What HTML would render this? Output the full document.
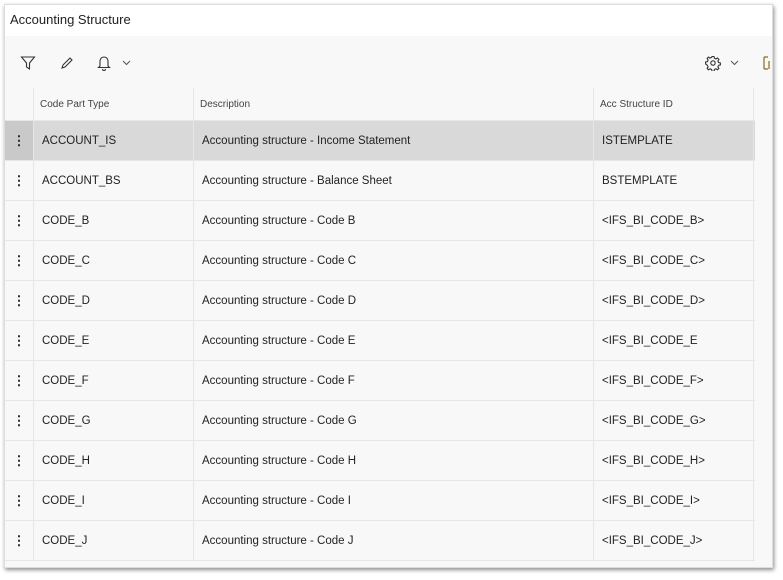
<!DOCTYPE html>
<html><head><style>
body{margin:0;width:783px;height:580px;background:#fff;font-family:"Liberation Sans",sans-serif;position:relative;overflow:hidden}
.win{position:absolute;left:4px;top:4px;width:769px;height:564px;background:#f8f8f8;box-shadow:1px 2px 4px rgba(0,0,0,.45);border:1px solid #ddd;box-sizing:border-box;overflow:hidden}
.title{height:31px;background:#fff;font-size:13px;color:#222;padding:7px 0 0 5px;box-sizing:border-box}
.tb{height:52px;position:relative}
.hdr,.row{position:absolute;left:0;height:40px;width:750px;border-bottom:1px solid #e6e6e6;box-sizing:border-box}
.hdr{top:83px;height:33px;font-size:10px;color:#444}
.c{position:absolute;top:0;height:100%;border-right:1px solid #e6e6e6;box-sizing:border-box;display:flex;align-items:center;padding-left:8px;white-space:nowrap}
.row{font-size:11.5px;color:#222}
.k{left:0;width:29px;justify-content:center;padding:0;font-weight:bold;font-size:13px}
.a{left:29px;width:160px}.b{left:189px;width:400px}.d{left:589px;width:160px}
.hdr .c{padding-left:6px}
.sel{background:#d9d9d9}.sel .k{background:#c9c9c9}
svg{position:absolute}
</style></head><body><div class="win">
<div class="title">Accounting Structure</div>
<div class="tb">
<svg style="left:15px;top:19px" width="16" height="16" viewBox="0 0 16 16" fill="none" stroke="#333" stroke-width="1.1"><path d="M1.5 2h13L9.5 8v6l-3-2V8z"/></svg>
<svg style="left:54px;top:19px" width="16" height="16" viewBox="0 0 16 16" fill="none" stroke="#333" stroke-width="1.1"><path d="M3 13l1-3 7-7 2 2-7 7z"/></svg>
<svg style="left:91px;top:18px" width="16" height="18" viewBox="0 0 16 18" fill="none" stroke="#333" stroke-width="1.1"><path d="M4 12V7a4 4 0 018 0v5l1.5 1.5h-11zM6.5 15a1.5 1.5 0 003 0"/></svg>
<svg style="left:117px;top:24px" width="9" height="6" viewBox="0 0 9 6" fill="none" stroke="#555"><path d="M1 1l3.5 3.5L8 1"/></svg>
<svg style="left:700px;top:19px" width="16" height="16" viewBox="0 0 16 16" fill="none" stroke="#333" stroke-width="1.1"><circle cx="8" cy="8" r="2.2"/><path d="M7 1.5h2l.4 1.8 1.5.7 1.6-1 1.4 1.4-1 1.6.7 1.5 1.8.4v2l-1.8.4-.7 1.5 1 1.6-1.4 1.4-1.6-1-1.5.7-.4 1.8H7l-.4-1.8-1.5-.7-1.6 1-1.4-1.4 1-1.6-.7-1.5L.6 9V7l1.8-.4.7-1.5-1-1.6 1.4-1.4 1.6 1 1.5-.7z"/></svg>
<svg style="left:725px;top:24px" width="9" height="6" viewBox="0 0 9 6" fill="none" stroke="#555"><path d="M1 1l3.5 3.5L8 1"/></svg>
<svg style="left:758px;top:20px" width="12" height="14" viewBox="0 0 12 14" fill="none" stroke="#8a6a1a" stroke-width="1.2"><path d="M1 1v12M1 1h4M1 13h4M6 5v8"/></svg>
</div>
<div class="hdr"><div class="c k"></div><div class="c a">Code Part Type</div><div class="c b">Description</div><div class="c d">Acc Structure ID</div></div>
<div class="row sel" style="top:116px"><div class="c k">⋮</div><div class="c a">ACCOUNT_IS</div><div class="c b">Accounting structure - Income Statement</div><div class="c d">ISTEMPLATE</div></div>
<div class="row" style="top:156px"><div class="c k">⋮</div><div class="c a">ACCOUNT_BS</div><div class="c b">Accounting structure - Balance Sheet</div><div class="c d">BSTEMPLATE</div></div>
<div class="row" style="top:196px"><div class="c k">⋮</div><div class="c a">CODE_B</div><div class="c b">Accounting structure - Code B</div><div class="c d">&lt;IFS_BI_CODE_B&gt;</div></div>
<div class="row" style="top:236px"><div class="c k">⋮</div><div class="c a">CODE_C</div><div class="c b">Accounting structure - Code C</div><div class="c d">&lt;IFS_BI_CODE_C&gt;</div></div>
<div class="row" style="top:276px"><div class="c k">⋮</div><div class="c a">CODE_D</div><div class="c b">Accounting structure - Code D</div><div class="c d">&lt;IFS_BI_CODE_D&gt;</div></div>
<div class="row" style="top:316px"><div class="c k">⋮</div><div class="c a">CODE_E</div><div class="c b">Accounting structure - Code E</div><div class="c d">&lt;IFS_BI_CODE_E</div></div>
<div class="row" style="top:356px"><div class="c k">⋮</div><div class="c a">CODE_F</div><div class="c b">Accounting structure - Code F</div><div class="c d">&lt;IFS_BI_CODE_F&gt;</div></div>
<div class="row" style="top:396px"><div class="c k">⋮</div><div class="c a">CODE_G</div><div class="c b">Accounting structure - Code G</div><div class="c d">&lt;IFS_BI_CODE_G&gt;</div></div>
<div class="row" style="top:436px"><div class="c k">⋮</div><div class="c a">CODE_H</div><div class="c b">Accounting structure - Code H</div><div class="c d">&lt;IFS_BI_CODE_H&gt;</div></div>
<div class="row" style="top:476px"><div class="c k">⋮</div><div class="c a">CODE_I</div><div class="c b">Accounting structure - Code I</div><div class="c d">&lt;IFS_BI_CODE_I&gt;</div></div>
<div class="row" style="top:516px"><div class="c k">⋮</div><div class="c a">CODE_J</div><div class="c b">Accounting structure - Code J</div><div class="c d">&lt;IFS_BI_CODE_J&gt;</div></div>
</div></body></html>
